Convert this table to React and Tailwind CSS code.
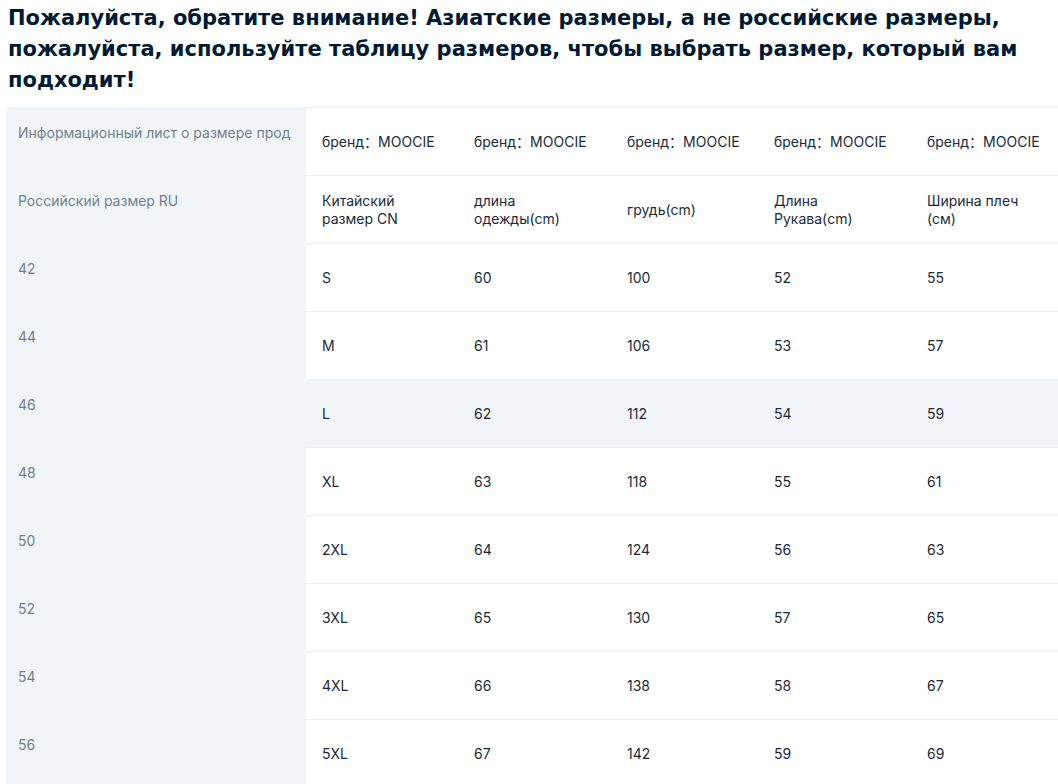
import React from "react";

const rows = [
  ["42", "S", "60", "100", "52", "55"],
  ["44", "M", "61", "106", "53", "57"],
  ["46", "L", "62", "112", "54", "59"],
  ["48", "XL", "63", "118", "55", "61"],
  ["50", "2XL", "64", "124", "56", "63"],
  ["52", "3XL", "65", "130", "57", "65"],
  ["54", "4XL", "66", "138", "58", "67"],
  ["56", "5XL", "67", "142", "59", "69"],
];

const brand = "бренд：MOOCIE";
const header2 = [
  <>Китайский<br />размер CN</>,
  <>длина<br />одежды(cm)</>,
  <>грудь(cm)</>,
  <>Длина<br />Рукава(cm)</>,
  <>Ширина плеч<br />(см)</>,
];

function Row({ left, cells, highlight }) {
  return (
    <div className="grid grid-cols-[300px_152px_153px_147px_153px_147px] h-[68px]">
      <div className="bg-[#f2f5f7] px-3 pt-4 text-[#707f8d] leading-5 whitespace-nowrap">{left}</div>
      {cells.map((c, i) => (
        <div
          key={i}
          className={
            "flex items-center px-4 leading-[18px] text-[#1c2a37] border-t border-[#eef1f4] " +
            (highlight ? "bg-[#f2f5f7]" : "bg-white")
          }
        >
          <div>{c}</div>
        </div>
      ))}
    </div>
  );
}

export default function App() {
  return (
    <div className="bg-white w-[1058px] min-h-[784px] overflow-hidden" style={{ fontFamily: "Inter, 'Noto Sans CJK SC', sans-serif" }}>
      <h1 className="pl-2 pr-3 pt-[3px] text-[21px] leading-[31px] font-bold text-[#001a34]" style={{ fontFamily: "'DejaVu Sans', sans-serif" }}>
        Пожалуйста, обратите внимание! Азиатские размеры, а не российские размеры, пожалуйста, используйте таблицу размеров, чтобы выбрать размер, который вам подходит!
      </h1>
      <div className="ml-[6px] mt-[11px] text-[14px]">
        <Row left="Информационный лист о размере прод" cells={[brand, brand, brand, brand, brand]} />
        <Row left="Российский размер RU" cells={header2} />
        {rows.map((r) => (
          <Row key={r[0]} left={r[0]} cells={r.slice(1)} highlight={r[0] === "46"} />
        ))}
      </div>
    </div>
  );
}
